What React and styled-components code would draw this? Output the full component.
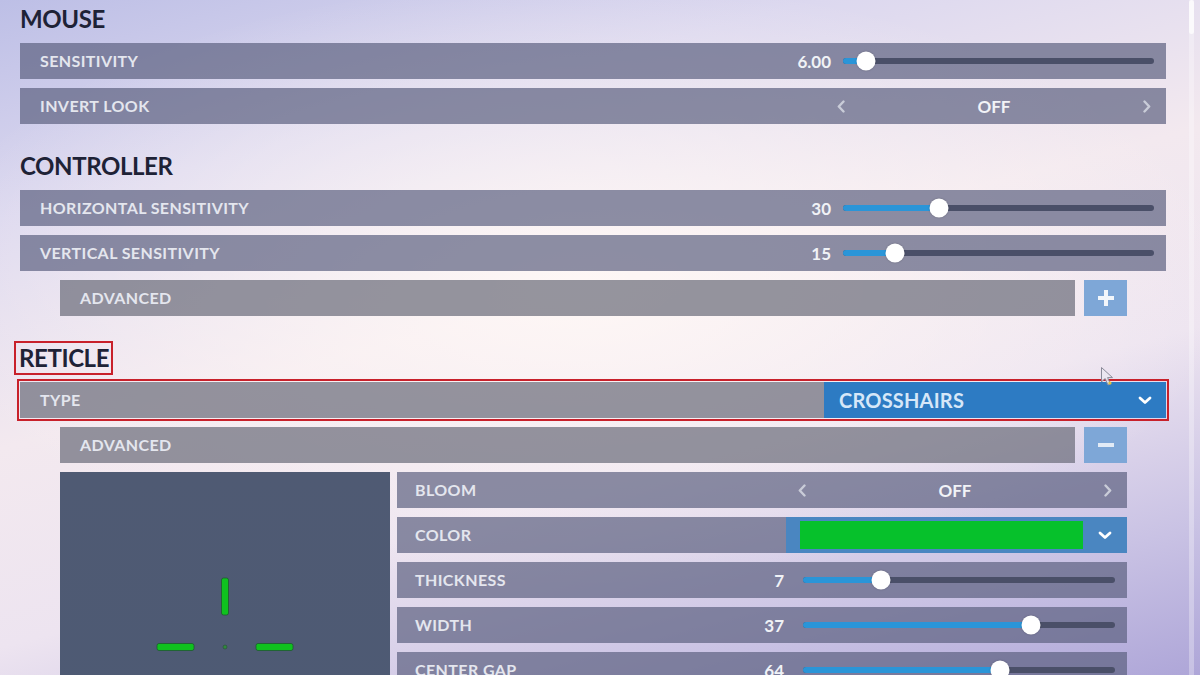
import React from "react";
import styled, { createGlobalStyle, css } from "styled-components";

const GlobalStyle = createGlobalStyle`
  html, body {
    margin: 0;
    padding: 0;
  }
  body {
    font-family: "Lato", "Noto Sans", sans-serif;
    background: #ece4f0;
  }
`;

const Page = styled.div`
  position: relative;
  width: 1200px;
  height: 675px;
  overflow: hidden;
  display: flex;
  background:
    radial-gradient(ellipse 55% 45% at 48% 42%, rgba(255, 248, 246, 0.95) 0%, rgba(255, 248, 246, 0) 100%),
    linear-gradient(165deg, #bdbfe6 0%, #dcd8ef 22%, #f3e9ef 45%, #ede4f0 65%, #c9c2e4 85%, #aea6d8 100%);
`;

const Content = styled.main`
  flex: 1;
  display: flex;
  flex-direction: column;
  padding: 4px 23px 0 20px;
`;

const Heading = styled.h2`
  display: inline-block;
  align-self: flex-start;
  margin: ${(p) => p.$top}px 0 9px;
  font-size: 24px;
  line-height: 30px;
  font-weight: 700;
  color: #1e2236;
  letter-spacing: -0.4px;
  ${(p) =>
    p.$highlight &&
    css`
      margin-left: -4px;
      padding: 0 2px 0 3px;
      outline: 2px solid #c8212b;
    `}
`;

const Stack = styled.div`
  display: flex;
  flex-direction: column;
  gap: 9px;
`;

const Row = styled.div`
  height: 36px;
  flex-shrink: 0;
  display: flex;
  align-items: center;
  background: ${(p) =>
    p.$tone === "gray" ? "rgba(108, 110, 124, 0.72)" : "rgba(92, 97, 128, 0.7)"};
  ${(p) =>
    p.$highlight &&
    css`
      outline: 2px solid #c8212b;
      outline-offset: 1px;
    `}
`;

const Label = styled.span`
  flex: 1;
  padding-left: ${(p) => p.$pad || 20}px;
  padding-bottom: 1px;
  font-size: 16px;
  font-weight: 700;
  letter-spacing: 0.4px;
  color: #e4e6ee;
  white-space: nowrap;
`;

const SliderWrap = styled.div`
  display: flex;
  align-items: center;
  margin-right: 12px;
`;

const Value = styled.span`
  width: 60px;
  text-align: right;
  margin-right: ${(p) => p.$gap}px;
  font-size: 17px;
  font-weight: 700;
  color: #f0f2f6;
`;

const Track = styled.div`
  position: relative;
  width: ${(p) => p.$width}px;
  height: 6px;
  border-radius: 3px;
  background: #4a4f68;
`;

const Fill = styled.div`
  position: absolute;
  left: 0;
  top: 0;
  bottom: 0;
  border-radius: 3px;
  background: #2a95d8;
`;

const Thumb = styled.div`
  position: absolute;
  top: 50%;
  width: 19px;
  height: 19px;
  border-radius: 50%;
  background: #ffffff;
  transform: translate(-50%, -50%);
  box-shadow: 0 0 2px rgba(0, 0, 0, 0.25);
`;

const Selector = styled.div`
  width: 340px;
  box-sizing: border-box;
  display: flex;
  align-items: center;
  justify-content: space-between;
  padding: 0 15px 0 11px;
`;

const SelectorValue = styled.span`
  font-size: 17px;
  font-weight: 700;
  color: #f2f3f7;
`;

const Dropdown = styled.div`
  align-self: stretch;
  width: ${(p) => p.$width}px;
  box-sizing: border-box;
  display: flex;
  align-items: center;
  padding-left: ${(p) => p.$pad}px;
  background: ${(p) => (p.$muted ? "#4a86c1" : "#2d7bc3")};
`;

const DropdownText = styled.span`
  flex: 1;
  font-size: 20px;
  font-weight: 700;
  color: #d6e7f8;
  letter-spacing: 0.2px;
`;

const Swatch = styled.div`
  flex: 1;
  align-self: stretch;
  margin: 4px 0;
  background: ${(p) => p.$color};
`;

const ChevronBox = styled.div`
  width: ${(p) => p.$width}px;
  display: flex;
  justify-content: center;
  align-items: center;
`;

const AdvancedLine = styled.div`
  display: flex;
  gap: 9px;
  margin: 0 39px 0 40px;
  & > ${Row} {
    flex: 1;
  }
`;

const SquareButton = styled.div`
  width: 43px;
  height: 36px;
  flex-shrink: 0;
  display: flex;
  align-items: center;
  justify-content: center;
  background: #7ea7d7;
`;

const ReticleBody = styled.div`
  display: flex;
  gap: 7px;
  margin: 0 39px 0 40px;
`;

const Preview = styled.div`
  width: 330px;
  height: 350px;
  flex-shrink: 0;
  display: flex;
  align-items: center;
  justify-content: center;
  background: linear-gradient(180deg, #4f5a73 0%, #4d5a74 100%);
`;

const SubRows = styled(Stack)`
  flex: 1;
`;

const ScrollTrack = styled.div`
  width: 5px;
  margin-right: 6px;
  background: rgba(255, 255, 255, 0.3);
`;

const ScrollThumb = styled.div`
  height: 34px;
  border-radius: 3px;
  background: rgba(255, 255, 255, 0.75);
`;

const Cursor = styled.svg`
  position: absolute;
  left: 1100px;
  top: 366px;
`;

function Slider({ value, pct, width = 311, gap = 12 }) {
  return (
    <SliderWrap>
      <Value $gap={gap}>{value}</Value>
      <Track $width={width}>
        <Fill style={{ width: `${pct}%` }} />
        <Thumb style={{ left: `${pct}%` }} />
      </Track>
    </SliderWrap>
  );
}

function ArrowLeft() {
  return (
    <svg width="8" height="13" viewBox="0 0 8 13">
      <polyline points="6.5,1.5 1.8,6.5 6.5,11.5" fill="none" stroke="#c9ccd8" strokeWidth="2.4" strokeLinecap="round" strokeLinejoin="round" />
    </svg>
  );
}

function ArrowRight() {
  return (
    <svg width="8" height="13" viewBox="0 0 8 13">
      <polyline points="1.5,1.5 6.2,6.5 1.5,11.5" fill="none" stroke="#c9ccd8" strokeWidth="2.4" strokeLinecap="round" strokeLinejoin="round" />
    </svg>
  );
}

function ChevronDown() {
  return (
    <svg width="14" height="9" viewBox="0 0 14 9">
      <polyline points="2,2 7,6.5 12,2" fill="none" stroke="#ffffff" strokeWidth="2.8" strokeLinecap="round" strokeLinejoin="round" />
    </svg>
  );
}

function Choice({ value }) {
  return (
    <Selector>
      <ArrowLeft />
      <SelectorValue>{value}</SelectorValue>
      <ArrowRight />
    </Selector>
  );
}

function Plus() {
  return (
    <svg width="18" height="18" viewBox="0 0 18 18">
      <rect x="7" y="1" width="4" height="16" fill="#f2f6fb" />
      <rect x="1" y="7" width="16" height="4" fill="#f2f6fb" />
    </svg>
  );
}

function Minus() {
  return (
    <svg width="18" height="18" viewBox="0 0 18 18">
      <rect x="1" y="7" width="16" height="4" fill="#e2ebf6" />
    </svg>
  );
}

function Crosshair() {
  const bar = { fill: "#0fc21f", stroke: "#1d5a2e", strokeWidth: 0.8 };
  return (
    <svg width="330" height="350" viewBox="-165 -175 330 350">
      <rect x="-3.5" y="-69" width="7" height="37" rx="2" {...bar} />
      <rect x="-3.5" y="32" width="7" height="37" rx="2" {...bar} />
      <rect x="-68" y="-3.5" width="37" height="7" rx="2" {...bar} />
      <rect x="31" y="-3.5" width="37" height="7" rx="2" {...bar} />
      <circle cx="0" cy="0" r="2" fill="#2f8a3c" stroke="#2c4a3a" strokeWidth="0.6" />
    </svg>
  );
}

export default function App() {
  return (
    <>
      <GlobalStyle />
      <Page>
        <Content>
          <Heading $top={0}>MOUSE</Heading>
          <Stack>
            <Row>
              <Label>SENSITIVITY</Label>
              <Slider value="6.00" pct={7.4} />
            </Row>
            <Row>
              <Label>INVERT LOOK</Label>
              <Choice value="OFF" />
            </Row>
          </Stack>

          <Heading $top={27}>CONTROLLER</Heading>
          <Stack>
            <Row>
              <Label>HORIZONTAL SENSITIVITY</Label>
              <Slider value="30" pct={31} />
            </Row>
            <Row>
              <Label>VERTICAL SENSITIVITY</Label>
              <Slider value="15" pct={16.8} />
            </Row>
            <AdvancedLine>
              <Row $tone="gray">
                <Label>ADVANCED</Label>
              </Row>
              <SquareButton>
                <Plus />
              </SquareButton>
            </AdvancedLine>
          </Stack>

          <Heading $top={27} $highlight>RETICLE</Heading>
          <Stack>
            <Row $tone="gray" $highlight>
              <Label>TYPE</Label>
              <Dropdown $width={342} $pad={15}>
                <DropdownText>CROSSHAIRS</DropdownText>
                <ChevronBox $width={42}>
                  <ChevronDown />
                </ChevronBox>
              </Dropdown>
            </Row>
            <AdvancedLine>
              <Row $tone="gray">
                <Label>ADVANCED</Label>
              </Row>
              <SquareButton>
                <Minus />
              </SquareButton>
            </AdvancedLine>
            <ReticleBody>
              <Preview>
                <Crosshair />
              </Preview>
              <SubRows>
                <Row>
                  <Label $pad={18}>BLOOM</Label>
                  <Choice value="OFF" />
                </Row>
                <Row>
                  <Label $pad={18}>COLOR</Label>
                  <Dropdown $width={341} $pad={14} $muted>
                    <Swatch $color="#06c12b" />
                    <ChevronBox $width={44}>
                      <ChevronDown />
                    </ChevronBox>
                  </Dropdown>
                </Row>
                <Row>
                  <Label $pad={18}>THICKNESS</Label>
                  <Slider value="7" pct={25} width={312} gap={19} />
                </Row>
                <Row>
                  <Label $pad={18}>WIDTH</Label>
                  <Slider value="37" pct={73} width={312} gap={19} />
                </Row>
                <Row>
                  <Label $pad={18}>CENTER GAP</Label>
                  <Slider value="64" pct={63} width={312} gap={19} />
                </Row>
              </SubRows>
            </ReticleBody>
          </Stack>
        </Content>
        <ScrollTrack>
          <ScrollThumb />
        </ScrollTrack>
        <Cursor width="16" height="22" viewBox="0 0 16 22">
          <path d="M1.5 1.5 L1.5 16 L5 12.5 L8 19 L10.5 18 L7.6 11.6 L12.5 11.6 Z" fill="rgba(235,232,240,0.85)" stroke="#8a8a98" strokeWidth="1" strokeLinejoin="round" />
          <circle cx="10" cy="17" r="1.6" fill="#e6c23a" />
        </Cursor>
      </Page>
    </>
  );
}
